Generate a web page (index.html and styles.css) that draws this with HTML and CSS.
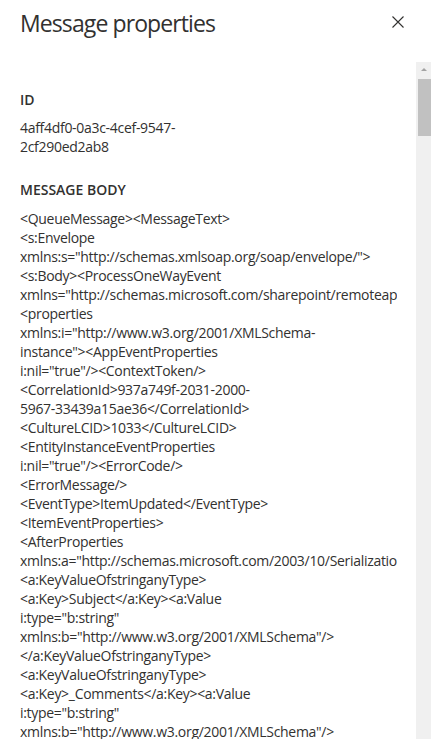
FILE: index.html
```html
<!DOCTYPE html>
<html lang="en">
<head>
  <meta charset="UTF-8">
  <meta name="viewport" content="width=device-width, initial-scale=1.0">
  <title>Message properties</title>
  <link rel="stylesheet" href="styles.css">
</head>
<body>
  <div class="header">
    <h1 class="title">Message properties</h1>
    <button class="close" aria-label="Close">
      <svg width="12" height="12" viewBox="0 0 12 12">
        <path d="M0.5 0.5 L11.5 11.5 M11.5 0.5 L0.5 11.5" stroke="#323130" stroke-width="1.1" fill="none"/>
      </svg>
    </button>
  </div>

  <div class="panel">
    <div class="content">
      <div class="label">ID</div>
      <div class="value">4aff4df0-0a3c-4cef-9547-<br>2cf290ed2ab8</div>

      <div class="label label-body">MESSAGE BODY</div>
      <div class="body">
        &lt;QueueMessage&gt;&lt;MessageText&gt;<br>
        &lt;s:Envelope<br>
        xmlns:s="http://schemas.xmlsoap.org/soap/envelope/"&gt;<br>
        &lt;s:Body&gt;&lt;ProcessOneWayEvent<br>
        xmlns="http://schemas.microsoft.com/sharepoint/remoteapp/"&gt;<br>
        &lt;properties<br>
        xmlns:i="http://www.w3.org/2001/XMLSchema-<br>
        instance"&gt;&lt;AppEventProperties<br>
        i:nil="true"/&gt;&lt;ContextToken/&gt;<br>
        &lt;CorrelationId&gt;937a749f-2031-2000-<br>
        5967-33439a15ae36&lt;/CorrelationId&gt;<br>
        &lt;CultureLCID&gt;1033&lt;/CultureLCID&gt;<br>
        &lt;EntityInstanceEventProperties<br>
        i:nil="true"/&gt;&lt;ErrorCode/&gt;<br>
        &lt;ErrorMessage/&gt;<br>
        &lt;EventType&gt;ItemUpdated&lt;/EventType&gt;<br>
        &lt;ItemEventProperties&gt;<br>
        &lt;AfterProperties<br>
        xmlns:a="http://schemas.microsoft.com/2003/10/Serialization/Arrays"&gt;<br>
        &lt;a:KeyValueOfstringanyType&gt;<br>
        &lt;a:Key&gt;Subject&lt;/a:Key&gt;&lt;a:Value<br>
        i:type="b:string"<br>
        xmlns:b="http://www.w3.org/2001/XMLSchema"/&gt;<br>
        &lt;/a:KeyValueOfstringanyType&gt;<br>
        &lt;a:KeyValueOfstringanyType&gt;<br>
        &lt;a:Key&gt;_Comments&lt;/a:Key&gt;&lt;a:Value<br>
        i:type="b:string"<br>
        xmlns:b="http://www.w3.org/2001/XMLSchema"/&gt;<br>
        &lt;/a:KeyValueOfstringanyType&gt;<br>
        &lt;a:KeyValueOfstringanyType&gt;
      </div>
    </div>

    <div class="scrollbar">
      <div class="arrow"></div>
      <div class="thumb"></div>
    </div>
  </div>
</body>
</html>
```

FILE: styles.css
```css
body{
  margin: 0;
  padding: 0;
  font-family: "Open Sans", "Noto Sans", sans-serif;
  color: #323130;
  background-color: white;
  height: 739px;
  overflow: hidden;
  display: flex;
  flex-direction: column;
}
.header{
  display: flex;
  justify-content: space-between;
  align-items: flex-start;
  padding: 7px 27px 23px 20px;
}
.title{
  margin: 0;
  font-size: 23px;
  font-weight: 400;
  letter-spacing: -0.9px;
  line-height: 32px;
}
.close{
  margin-top: 9px;
  padding: 0;
  border: none;
  background: none;
  width: 12px;
  height: 12px;
  display: flex;
}
.panel{
  flex: 1;
  display: flex;
  min-height: 0;
}
.content{
  flex: 1;
  padding: 28px 19px 0 20px;
  overflow: hidden;
  font-size: 14px;
  line-height: 19px;
  letter-spacing: -0.3px;
}
.label{
  font-weight: 600;
  letter-spacing: 0;
}
.value{
  margin-top: 9px;
}
.label-body{
  margin-top: 24px;
}
.body{
  margin-top: 10px;
  white-space: nowrap;
  overflow: hidden;
}
.scrollbar{
  width: 15px;
  background-color: #f0f0f0;
  display: flex;
  flex-direction: column;
}
.arrow{
  width: 0;
  height: 0;
  margin: 6px 0 0 5px;
  border-left: 3px solid transparent;
  border-right: 3px solid transparent;
  border-bottom: 3px solid #a3a3a3;
}
.thumb{
  margin: 8px 0 0 2px;
  width: 13px;
  height: 57px;
  background-color: #c1c1c1;
}
```
